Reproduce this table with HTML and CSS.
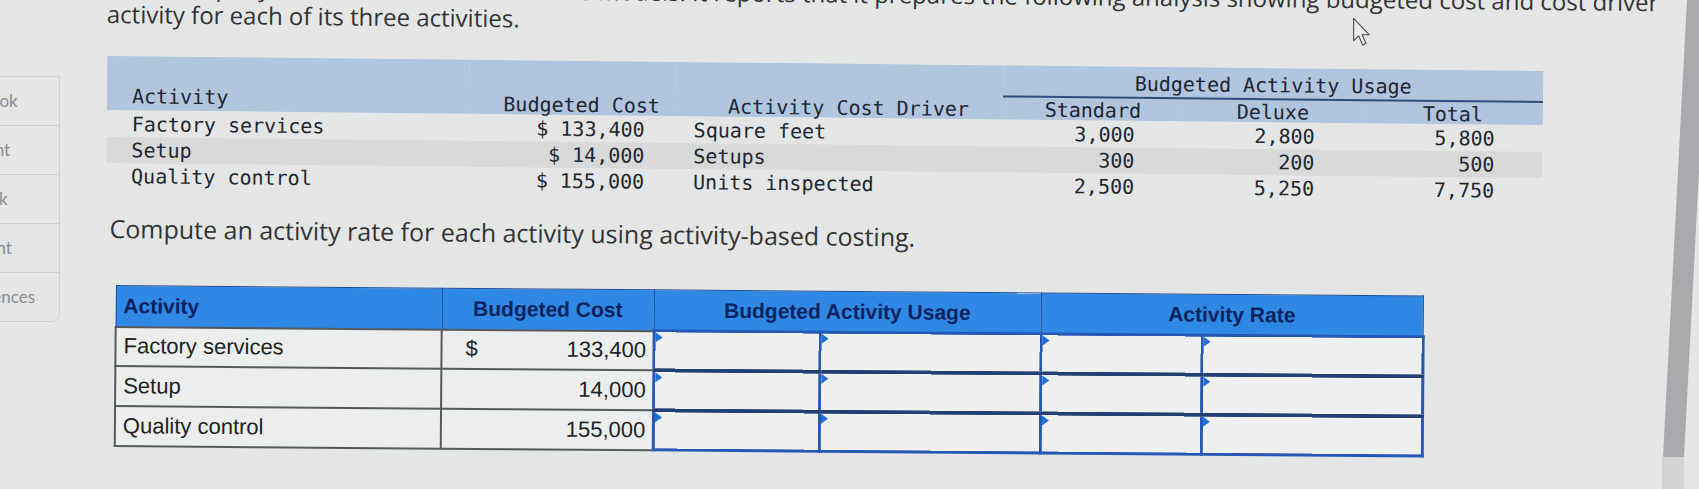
FILE: index.html
```html
<!DOCTYPE html>
<html lang="en">
<head>
    <meta charset="UTF-8">
    <meta name="viewport" content="width=device-width, initial-scale=1.0">
    <title>Activity-Based Costing</title>
    <link rel="stylesheet" href="styles.css">
</head>
<body>
    <div class="page">
        <div class="sidebar">
            <div class="side-item">eBook</div>
            <div class="side-item">Hint</div>
            <div class="side-item">Ask</div>
            <div class="side-item">Print</div>
            <div class="side-item">References</div>
        </div>

        <div class="main">
            <p class="intro">Aldo Company makes Standard and Deluxe models. It reports that it prepares the following analysis showing budgeted cost and cost driver<br>activity for each of its three activities.</p>

            <table class="drivers">
                <colgroup>
                    <col style="width: 362px">
                    <col style="width: 206px">
                    <col style="width: 328px">
                    <col style="width: 180px">
                    <col style="width: 180px">
                    <col style="width: 180px">
                </colgroup>
                <thead>
                    <tr>
                        <th rowspan="2" class="h-act">Activity</th>
                        <th rowspan="2" class="h-cost">Budgeted Cost</th>
                        <th rowspan="2" class="h-drv">Activity Cost Driver</th>
                        <th colspan="3" class="grp">Budgeted Activity Usage</th>
                    </tr>
                    <tr>
                        <th class="h-num">Standard</th>
                        <th class="h-num">Deluxe</th>
                        <th class="h-num">Total</th>
                    </tr>
                </thead>
                <tbody>
                    <tr class="first">
                        <td class="c-act">Factory services</td>
                        <td class="c-cost">$ 133,400</td>
                        <td class="c-drv">Square feet</td>
                        <td class="c-num">3,000</td>
                        <td class="c-num">2,800</td>
                        <td class="c-num">5,800</td>
                    </tr>
                    <tr class="shade">
                        <td class="c-act">Setup</td>
                        <td class="c-cost">$ 14,000</td>
                        <td class="c-drv">Setups</td>
                        <td class="c-num">300</td>
                        <td class="c-num">200</td>
                        <td class="c-num">500</td>
                    </tr>
                    <tr>
                        <td class="c-act">Quality control</td>
                        <td class="c-cost">$ 155,000</td>
                        <td class="c-drv">Units inspected</td>
                        <td class="c-num">2,500</td>
                        <td class="c-num">5,250</td>
                        <td class="c-num">7,750</td>
                    </tr>
                </tbody>
            </table>

            <p class="task">Compute an activity rate for each activity using activity-based costing.</p>

            <table class="answer">
                <colgroup>
                    <col style="width: 326px">
                    <col style="width: 212px">
                    <col style="width: 166px">
                    <col style="width: 221px">
                    <col style="width: 161px">
                    <col style="width: 221px">
                </colgroup>
                <thead>
                    <tr>
                        <th class="left">Activity</th>
                        <th>Budgeted Cost</th>
                        <th colspan="2">Budgeted Activity Usage</th>
                        <th colspan="2">Activity Rate</th>
                    </tr>
                </thead>
                <tbody>
                    <tr>
                        <td>Factory services</td>
                        <td class="money"><div class="amt"><span>$</span><span>133,400</span></div></td>
                        <td class="in"></td>
                        <td class="in"></td>
                        <td class="in"></td>
                        <td class="in"></td>
                    </tr>
                    <tr>
                        <td>Setup</td>
                        <td class="money"><div class="amt"><span></span><span>14,000</span></div></td>
                        <td class="in"></td>
                        <td class="in"></td>
                        <td class="in"></td>
                        <td class="in"></td>
                    </tr>
                    <tr>
                        <td>Quality control</td>
                        <td class="money"><div class="amt"><span></span><span>155,000</span></div></td>
                        <td class="in"></td>
                        <td class="in"></td>
                        <td class="in"></td>
                        <td class="in"></td>
                    </tr>
                </tbody>
            </table>
        </div>

        <div class="scroll">
            <div class="thumb"></div>
            <div class="track-end"></div>
        </div>
    </div>

    <svg class="cursor" viewBox="0 0 13 21" width="19" height="30">
        <path d="M1 1 L1 16.5 L4.6 13.2 L7.3 19.6 L9.6 18.6 L7 12.4 L11.8 12.4 Z" fill="#eceeed" stroke="#4a4c4e" stroke-width="0.8" stroke-linejoin="round"/>
    </svg>
</body>
</html>
```

FILE: styles.css
```css
body {
    margin: 0;
    background-color: #e4e6e5;
    font-family: "Open Sans", Lato, sans-serif;
    color: #2b2b2b;
    overflow: hidden;
}

.page {
    display: flex;
    height: 489px;
}

/* left tool menu, mostly cut off by the photo */
.sidebar {
    flex: none;
    align-self: flex-start;
    width: 130px;
    margin: 76px 0 0 -72px;
    border: 1px solid #cdd0cf;
    border-radius: 0 0 8px 0;
    font-family: Lato, sans-serif;
}

.side-item {
    height: 48px;
    line-height: 48px;
    text-align: center;
    font-size: 17px;
    color: #8b8e91;
    border-bottom: 1px solid #cdd0cf;
}

.side-item:last-child {
    border-bottom: none;
}

/* the screen was photographed slightly tilted */
.main {
    flex: 1;
    min-width: 0;
    margin-left: 47px;
    transform: rotate(0.6deg);
    transform-origin: 0 0;
}

.intro {
    margin: -28px 0 0;
    font-size: 24px;
    line-height: 28px;
    white-space: nowrap;
    color: #333;
}

.drivers {
    margin: 28px 0 0 1px;
    width: 1436px;
    table-layout: fixed;
    border-collapse: collapse;
    font-family: "DejaVu Sans Mono", "Liberation Mono", monospace;
    font-size: 20px;
    color: #1f2630;
}

.drivers th {
    background-color: #b1c5df;
    font-weight: normal;
    padding: 0;
    line-height: 20px;
    white-space: nowrap;
}

.drivers th[rowspan] {
    vertical-align: bottom;
}

.drivers .h-act {
    text-align: left;
    padding-left: 25px;
    padding-bottom: 4px;
}

.drivers .grp {
    padding-top: 4px;
    line-height: 26px;
    text-align: center;
    border-bottom: 2px solid #2f4f7f;
}

.drivers .h-num {
    padding-top: 2px;
    text-align: center;
}

.drivers .h-cost {
    text-align: right;
    padding-right: 15px;
}

.drivers .h-drv {
    text-align: right;
    padding-right: 34px;
}

.drivers td {
    padding: 0;
    line-height: 26px;
    white-space: pre;
}

.drivers .first td {
    padding-top: 1px;
}

.drivers .shade td {
    background-color: #d8dad9;
}

.c-act {
    padding-left: 25px !important;
}

.c-cost {
    text-align: right;
    padding-right: 30px !important;
}

.c-drv {
    padding-left: 19px !important;
}

.c-num {
    text-align: right;
    padding-right: 48px !important;
}

.task {
    margin: 24px 0 0 5px;
    font-size: 25px;
    line-height: 30px;
    color: #333;
}

.answer {
    margin: 42px 0 0 11px;
    width: 1307px;
    table-layout: fixed;
    border-collapse: collapse;
    font-family: "Liberation Sans", Arial, sans-serif;
    font-size: 22px;
    color: #222;
    transform: rotate(-0.15deg);
    transform-origin: 0 0;
}

.answer th {
    height: 39px;
    padding: 0 7px;
    background-color: #2e88e4;
    color: #0c235e;
    font-size: 21px;
    border: 1px solid #1e4f9a;
    text-align: center;
}

.answer th.left {
    text-align: left;
}

.answer td {
    height: 36px;
    padding: 0 7px;
    border: 2px solid #55595f;
    background-color: #eceeed;
}

.answer td.money {
    padding-right: 6px;
}

.amt {
    display: flex;
    justify-content: space-between;
    padding-left: 16px;
}

.answer td.in {
    position: relative;
    border: 3px solid #2558b4;
    background-color: #eef0f0;
}

.answer tbody tr + tr td.in {
    border-top: 4px solid #233f74;
}

/* little input marker in the corner */
.answer td.in::before {
    content: "";
    position: absolute;
    left: 0;
    top: 0;
    border-left: 7px solid #1f6fd8;
    border-top: 5px solid transparent;
    border-bottom: 5px solid transparent;
}

.scroll {
    flex: none;
    width: 37px;
    display: flex;
    flex-direction: column;
}

.thumb {
    width: 21px;
    height: 457px;
    margin-left: 1px;
    background-color: #a8aaad;
    transform: skewX(-3deg);
    transform-origin: bottom left;
}

.track-end {
    flex: 1;
    width: 22px;
    background-color: #d2d4d4;
}

.cursor {
    position: absolute;
    left: 1352px;
    top: 17px;
}
```
